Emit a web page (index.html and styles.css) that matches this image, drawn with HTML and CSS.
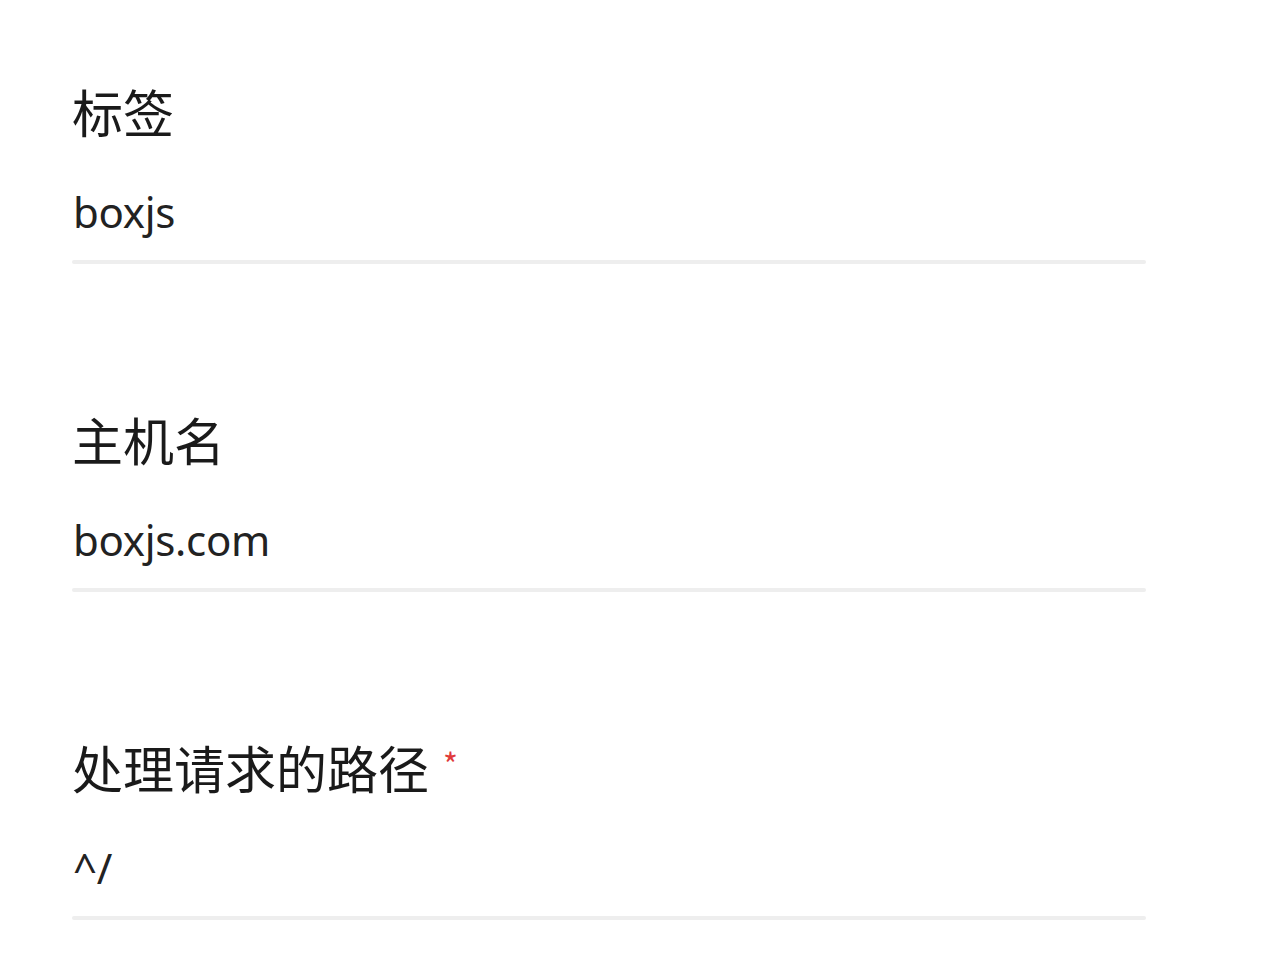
FILE: index.html
```html
<!DOCTYPE html>
<html lang="zh">
<head>
<meta charset="utf-8">
<link rel="stylesheet" href="styles.css">
</head>
<body>
<div class="form">
  <div class="field">
    <div class="label">标签</div>
    <div class="value">boxjs</div>
    <div class="rule"></div>
  </div>
  <div class="field">
    <div class="label">主机名</div>
    <div class="value">boxjs.com</div>
    <div class="rule"></div>
  </div>
  <div class="field">
    <div class="label">处理请求的路径<span class="req">*</span></div>
    <div class="value">^/</div>
    <div class="rule"></div>
  </div>
</div>
</body>
</html>
```
FILE: styles.css
```css
html, body {
  margin: 0;
  padding: 0;
  background: #ffffff;
}
body {
  font-family: "Noto Sans", "Noto Sans CJK SC", sans-serif;
  color: #1c1c1c;
}
.form {
  display: flex;
  flex-direction: column;
  padding: 78px 126px 0 72px;
  gap: 0;
}
.field {
  display: flex;
  flex-direction: column;
  height: 328px;
}
.field:last-child {
  height: auto;
}
.label {
  font-family: "Noto Sans CJK SC", sans-serif;
  font-size: 51px;
  line-height: 66px;
  font-weight: 400;
  color: #1a1a1a;
}
.req {
  color: #e03b3b;
  font-size: 32px;
  vertical-align: top;
  margin-left: 14px;
  line-height: 58px;
}
.value {
  font-family: "Noto Sans", sans-serif;
  font-size: 42px;
  line-height: 60px;
  margin-top: 38px;
  margin-left: 1px;
  color: #222;
  letter-spacing: -0.3px;
}
.rule {
  margin-top: 18px;
  height: 4px;
  background: #eeeeee;
  border-radius: 2px;
}
```
